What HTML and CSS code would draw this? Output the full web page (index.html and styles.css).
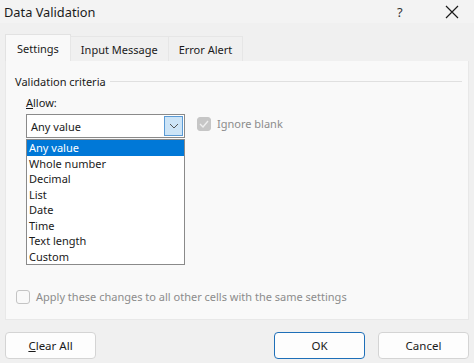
FILE: index.html
```html
<!DOCTYPE html>
<html lang="en">
<head>
    <meta charset="UTF-8">
    <title>Data Validation</title>
    <link rel="stylesheet" href="styles.css">
</head>
<body>
    <div class="dialog">
        <div class="titlebar">
            <span class="title">Data Validation</span>
            <span class="help">?</span>
            <span class="close">
                <svg width="14" height="14" viewBox="0 0 14 14"><path d="M1 1L13 13M13 1L1 13" stroke="#1a1a1a" stroke-width="1.2" fill="none"/></svg>
            </span>
        </div>

        <div class="tabs">
            <div class="tab active">Settings</div>
            <div class="tab">Input Message</div>
            <div class="tab">Error Alert</div>
        </div>

        <div class="panel">
            <div class="group-title">
                <span>Validation criteria</span>
                <div class="rule"></div>
            </div>

            <div class="allow-label"><u>A</u>llow:</div>
            <div class="allow-row">
                <div class="allow-col">
                    <div class="combo">
                        <span class="combo-value">Any value</span>
                        <span class="combo-btn">
                            <svg width="10" height="6" viewBox="0 0 10 6"><path d="M1 1L5 5L9 1" stroke="#555" stroke-width="1" fill="none"/></svg>
                        </span>
                    </div>
                    <ul class="list">
                        <li class="selected">Any value</li>
                        <li>Whole number</li>
                        <li>Decimal</li>
                        <li>List</li>
                        <li>Date</li>
                        <li>Time</li>
                        <li>Text length</li>
                        <li>Custom</li>
                    </ul>
                </div>
                <label class="check disabled">
                    <span class="box checked">
                        <svg width="10" height="8" viewBox="0 0 10 8"><path d="M1 4L4 7L9 1" stroke="#eeeeee" stroke-width="1.4" fill="none"/></svg>
                    </span>
                    Ignore blank
                </label>
            </div>

            <label class="check apply">
                <span class="box"></span>
                Apply these changes to all other cells with the same settings
            </label>
        </div>

        <div class="buttons">
            <button class="btn"><u>C</u>lear All</button>
            <div class="spacer"></div>
            <button class="btn primary">OK</button>
            <button class="btn">Cancel</button>
        </div>
    </div>
</body>
</html>
```

FILE: styles.css
```css
body {
    margin: 0;
    background: #f0f0f0;
    font-family: 'Noto Sans', 'Open Sans', Arial, sans-serif;
    font-size: 11px;
    color: #1a1a1a;
}
.dialog {
    width: 474px;
    height: 363px;
    overflow: hidden;
    display: flex;
    flex-direction: column;
}
.titlebar {
    height: 23px;
    display: flex;
    align-items: center;
    padding-left: 4px;
    background: #f3f3f3;
}
.title {
    font-size: 12.8px;
    flex: 1;
}
.help {
    font-size: 13px;
    width: 20px;
    color: #333;
    margin-right: 28px;
}
.close {
    width: 22px;
    display: flex;
    align-items: center;
    margin-right: 7px;
}
.tabs {
    display: flex;
    align-items: flex-end;
    margin-top: 11px;
    padding-left: 5px;
    height: 27px;
}
.tab {
    height: 25px;
    line-height: 25px;
    padding: 0 10px;
    background: #f0f0f0;
    border: 1px solid #e6e6e6;
    border-bottom: none;
    margin-left: -1px;
    box-sizing: border-box;
}
.tab.active {
    height: 27px;
    line-height: 27px;
    background: #f9f9f9;
    border-color: #e2e2e2;
    padding: 0 11px;
    margin-left: 0;
}
.panel {
    margin: 0 5px;
    height: 259px;
    background: #f9f9f9;
    border: 1px solid #e8e8e8;
    border-top: none;
    display: flex;
    flex-direction: column;
    padding: 13px 0 0 9px;
    box-sizing: border-box;
}
.group-title {
    display: flex;
    align-items: center;
    padding-right: 6px;
}
.rule {
    flex: 1;
    height: 1px;
    background: #e0e0e0;
    margin-left: 4px;
}
.allow-label {
    margin: 6px 0 0 11px;
}
.allow-row {
    display: flex;
    align-items: flex-start;
    margin: 4px 0 0 11px;
}
.allow-col {
    width: 159px;
}
.combo {
    height: 24px;
    box-sizing: border-box;
    border: 1px solid #8a8a8a;
    background: #fff;
    display: flex;
    align-items: center;
    padding: 1px;
}
.combo-value {
    flex: 1;
    padding-left: 3px;
}
.combo-btn {
    width: 19px;
    height: 20px;
    box-sizing: border-box;
    background: #cce4f7;
    border: 1px solid #5b9bd5;
    display: flex;
    align-items: center;
    justify-content: center;
}
.list {
    list-style: none;
    margin: 1px 0 0 0;
    padding: 0;
    border: 1px solid #8a8a8a;
    background: #fff;
}
.list li {
    height: 15.5px;
    line-height: 15.5px;
    padding-left: 2px;
}
.list li.selected {
    background: #0078d7;
    color: #fff;
}
.check {
    display: flex;
    align-items: center;
    gap: 6px;
}
.check.disabled {
    color: #8c8c8c;
    margin: 2px 0 0 12px;
}
.box {
    width: 14px;
    height: 14px;
    box-sizing: border-box;
    border: 1px solid #b0b0b0;
    border-radius: 3px;
    background: #fff;
    display: flex;
    align-items: center;
    justify-content: center;
}
.box.checked {
    background: #c6c6c6;
    border-color: #c6c6c6;
}
.apply {
    color: #8c8c8c;
    margin: 24px 0 0 1px;
}
.apply .box {
    border-color: #c4c4c4;
    background: #f9f9f9;
}
.buttons {
    display: flex;
    padding: 12px 5px 0 5px;
    gap: 13px;
}
.spacer {
    flex: 1;
}
.btn {
    width: 91px;
    height: 27px;
    font-family: inherit;
    font-size: 11.5px;
    color: #1a1a1a;
    background: #fdfdfd;
    border: 1px solid #d4d4d4;
    border-radius: 4px;
}
.btn.primary {
    border-color: #1e6fb8;
}
```
